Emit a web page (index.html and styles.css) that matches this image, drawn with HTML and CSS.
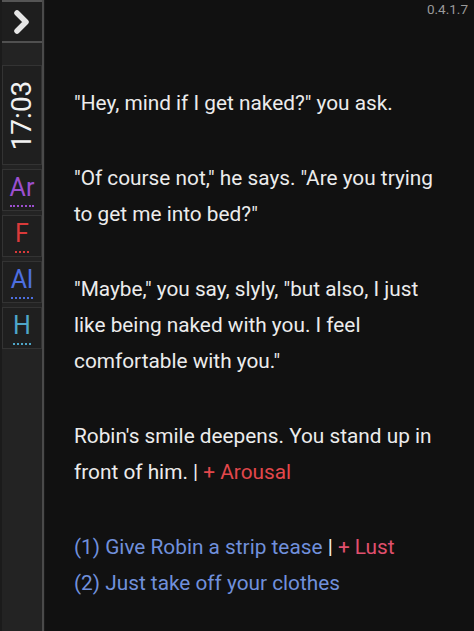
FILE: index.html
```html
<!DOCTYPE html>
<html lang="en">
<head>
    <meta charset="UTF-8">
    <meta name="viewport" content="width=device-width, initial-scale=1.0">
    <title>Story</title>
    <link rel="stylesheet" href="styles.css">
</head>
<body>
    <div class="app">
        <!-- Side bar -->
        <aside class="sidebar">
            <button class="toggle">
                <svg width="24" height="30" viewBox="0 0 24 30">
                    <path d="M7 6 L16 15 L7 24" fill="none" stroke="#e6e6e6" stroke-width="5.5" stroke-linecap="round" stroke-linejoin="round"/>
                </svg>
            </button>
            <div class="clock"><span>17:03</span></div>
            <div class="stat stat-ar"><span>Ar</span></div>
            <div class="stat stat-f"><span>F</span></div>
            <div class="stat stat-al"><span>Al</span></div>
            <div class="stat stat-h"><span>H</span></div>
        </aside>

        <!-- Story text -->
        <main class="story">
            <div class="version">0.4.1.7</div>
            <p>"Hey, mind if I get naked?" you ask.</p>
            <p>"Of course not," he says. "Are you trying to get me into bed?"</p>
            <p>"Maybe," you say, slyly, "but also, I just like being naked with you. I feel comfortable with you."</p>
            <p>Robin's smile deepens. You stand up in front of him. | <span class="arousal">+ Arousal</span></p>
            <div class="choices">
                <a class="choice">(1) Give Robin a strip tease <span class="sep">|</span> <span class="lust">+ Lust</span></a>
                <a class="choice">(2) Just take off your clothes</a>
            </div>
        </main>
    </div>
</body>
</html>
```

FILE: styles.css
```css
/* Base styles */
html, body {
    margin: 0;
    padding: 0;
    height: 100%;
    background-color: #111;
}

body {
    font-family: Roboto, "Noto Sans", sans-serif;
    color: #ececec;
}

.app {
    display: flex;
    height: 631px;
}

/* Sidebar */
.sidebar {
    width: 40px;
    flex-shrink: 0;
    background-color: #232323;
    border-left: 2px solid #1b1b1b;
    border-right: 2px solid #4a4a4a;
    box-shadow: 1px 0 0 #1a1a1a;
    display: flex;
    flex-direction: column;
    gap: 4px;
}

.toggle {
    height: 43px;
    margin: 0;
    padding: 0;
    background-color: #1e1e1e;
    border: none;
    border-top: 2px solid #555;
    border-bottom: 2px solid #505050;
    display: flex;
    align-items: center;
    justify-content: center;
    margin-bottom: 18px;
}

.clock {
    height: 98px;
    background-color: #1f1f1f;
    border: 1px solid #333;
    display: flex;
    align-items: center;
    justify-content: center;
}

.clock span {
    transform: rotate(-90deg);
    font-size: 28px;
    color: #f2f2f2;
    white-space: nowrap;
}

.stat {
    height: 40px;
    background-color: #1f1f1f;
    border: 1px solid #333;
    display: flex;
    align-items: flex-start;
    justify-content: center;
}

.stat span {
    font-size: 25px;
    line-height: 28px;
    margin-top: 4px;
    padding-bottom: 3px;
    border-bottom: 2px dotted currentColor;
}

.stat-ar { color: #9c4fcf; }
.stat-f { color: #d93a3a; }
.stat-al { color: #4d6fe0; }
.stat-h { color: #4ea6c8; }

/* Story */
.story {
    position: relative;
    flex: 1;
    padding: 85px 28px 0 30px;
    font-size: 20.8px;
    line-height: 36px;
}

.story p {
    margin: 0 0 39px 0;
}

.version {
    position: absolute;
    top: 1px;
    right: 6px;
    font-size: 13.5px;
    line-height: 16px;
    color: #9a9a9a;
}

.arousal {
    color: #e2474b;
}

.choices {
    display: flex;
    flex-direction: column;
}

.choice {
    color: #7090dc;
    cursor: pointer;
}

.choice .sep {
    color: #eee;
}

.lust {
    color: #e0506e;
}
```
